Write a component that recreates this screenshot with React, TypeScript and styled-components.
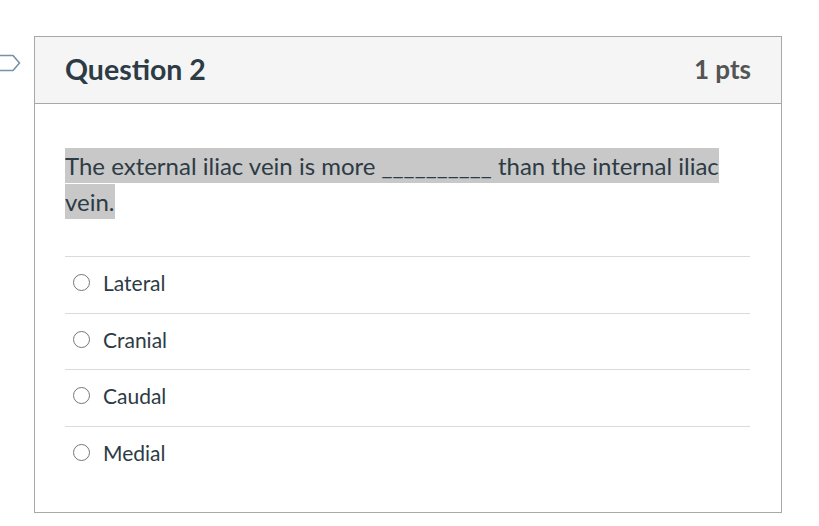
import React from 'react'
import styled, { createGlobalStyle } from 'styled-components'

const GlobalStyle = createGlobalStyle`
  html, body {
    margin: 0;
    padding: 0;
    background: #fff;
    font-family: Lato, "Open Sans", sans-serif;
  }
`

const Page = styled.div`
  display: flex;
  align-items: flex-start;
  padding-top: 36px;
  width: 819px;
  height: 526px;
  box-sizing: border-box;
`

const FlagColumn = styled.div`
  width: 34px;
  display: flex;
  padding-top: 18px;
  flex-shrink: 0;
`

const Card = styled.div`
  width: 748px;
  height: 477px;
  box-sizing: border-box;
  border: 1px solid #a8a8a8;
  background: #fff;
  display: flex;
  flex-direction: column;
`

const Header = styled.div`
  height: 67px;
  box-sizing: border-box;
  background: #f5f5f5;
  border-bottom: 1px solid #a8a8a8;
  display: flex;
  align-items: center;
  justify-content: space-between;
  padding: 0 30px 0 30px;
`

const Title = styled.h2`
  margin: 0;
  font-size: 28.5px;
  font-weight: 700;
  color: #2d3b45;
  padding-bottom: 3px;
`

const Points = styled.div`
  font-size: 26px;
  font-weight: 700;
  color: #545454;
  padding-bottom: 3px;
`

const Body = styled.div`
  padding: 44px 31px 0 30px;
`

const QuestionText = styled.p`
  margin: 0 0 36px 0;
  font-size: 24px;
  line-height: 36px;
  color: #2d3b45;
`

const Highlight = styled.span`
  background: #c8c8c8;
  padding: 3px 0;
`

const Answers = styled.div`
  display: flex;
  flex-direction: column;
`

const Answer = styled.label`
  display: flex;
  align-items: center;
  height: 56.5px;
  box-sizing: border-box;
  border-top: 1px solid #dadada;
  padding: 0 0 4px 8px;
  gap: 13px;
  font-size: 21px;
  color: #2d3b45;
`

const Radio = styled.span`
  width: 17px;
  height: 17px;
  box-sizing: border-box;
  border: 1.5px solid #767676;
  border-radius: 50%;
  flex-shrink: 0;
`

const answers = ['Lateral', 'Cranial', 'Caudal', 'Medial']

export default function App() {
  return (
    <>
      <GlobalStyle />
      <Page>
        <FlagColumn>
          <svg width="22" height="18" viewBox="0 0 22 18">
            <path
              d="M-4 1.5 H13 L19.5 9 L13 16.5 H-4"
              fill="none"
              stroke="#7592a8"
              strokeWidth="1.6"
              strokeLinejoin="round"
            />
          </svg>
        </FlagColumn>
        <Card>
          <Header>
            <Title>Question 2</Title>
            <Points>1 pts</Points>
          </Header>
          <Body>
            <QuestionText>
              <Highlight>
                The external iliac vein is more __________ than the internal iliac vein.
              </Highlight>
            </QuestionText>
            <Answers>
              {answers.map((a) => (
                <Answer key={a}>
                  <Radio />
                  {a}
                </Answer>
              ))}
            </Answers>
          </Body>
        </Card>
      </Page>
    </>
  )
}
